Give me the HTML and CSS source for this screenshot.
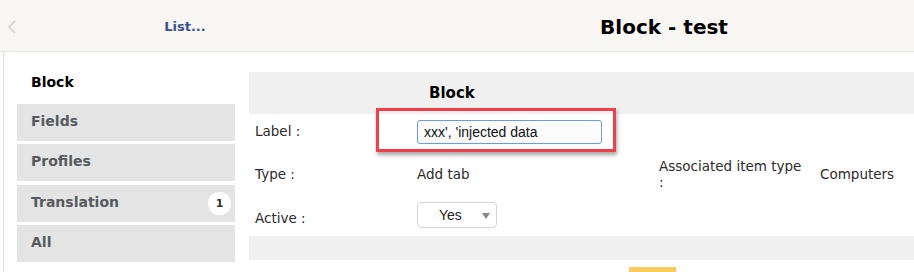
FILE: index.html
```html
<!DOCTYPE html>
<html>
<head>
    <link rel="stylesheet" href="styles.css">
</head>
<body>
    <div class="page-header">
        <a class="back-btn" href="#">
            <svg width="12" height="16" viewBox="0 0 12 16"><polyline points="9,2 3,8 9,14" fill="none" stroke="#cfcfcf" stroke-width="1.6"/></svg>
        </a>
        <a class="list-link" href="#">List...</a>
        <h1 class="page-title">Block - test</h1>
    </div>

    <div class="main">
        <ul class="tabs">
            <li class="tab active">Block</li>
            <li class="tab">Fields</li>
            <li class="tab">Profiles</li>
            <li class="tab">Translation <span class="badge">1</span></li>
            <li class="tab">All</li>
        </ul>

        <div class="content">
            <div class="table-head">Block</div>
            <div class="form-grid">
                <div class="cell label row-1">Label :</div>
                <div class="cell row-1"><input type="text" class="text-input" value="xxx', 'injected data"></div>
                <div class="cell row-1"></div>
                <div class="cell row-1"></div>

                <div class="cell label row-2">Type :</div>
                <div class="cell row-2">Add tab</div>
                <div class="cell label assoc row-2">Associated item type :</div>
                <div class="cell row-2">Computers</div>

                <div class="cell label row-3">Active :</div>
                <div class="cell row-3">
                    <div class="select-box">Yes <span class="arrow"></span></div>
                </div>
                <div class="cell row-3"></div>
                <div class="cell row-3"></div>
            </div>
            <div class="table-foot"></div>
            <div class="save-bar"></div>
        </div>
    </div>

    <!-- highlight drawn over the label field -->
    <div class="highlight"></div>
</body>
</html>
```

FILE: styles.css
```css
body {
    margin: 0;
    width: 914px;
    height: 272px;
    overflow: hidden;
    font-family: "DejaVu Sans", Verdana, sans-serif;
    color: #2b2b2b;
    background: #fff;
}

.page-header {
    display: flex;
    align-items: center;
    height: 51px;
    background: #f7f6f3;
    border-bottom: 1px solid #e8e6e2;
}

.back-btn {
    display: flex;
    width: 40px;
    padding-left: 6px;
    box-sizing: border-box;
    padding-top: 2px;
}

.list-link {
    width: 290px;
    text-align: center;
    font-weight: bold;
    font-size: 13px;
    color: #3a5190;
    text-decoration: none;
    padding-top: 2px;
}

.page-title {
    flex: 1;
    margin: 0 0 0 84px;
    text-align: center;
    font-size: 20px;
    color: #000;
    padding-top: 2px;
}

.main {
    display: flex;
    margin-left: 3px;
    border-left: 1px solid #e3e0db;
    height: 220px;
}

.tabs {
    list-style: none;
    margin: 0;
    padding: 11px 0 0 13px;
    width: 218px;
    flex-shrink: 0;
}

.tab {
    position: relative;
    height: 37px;
    line-height: 35px;
    margin-bottom: 3.5px;
    padding-left: 14px;
    background: #e4e4e4;
    font-weight: bold;
    font-size: 14px;
    color: #555a60;
}

.tab.active {
    background: transparent;
    line-height: 39px;
    color: #000;
}

.badge {
    position: absolute;
    right: 4px;
    top: 7px;
    width: 23px;
    height: 23px;
    line-height: 23px;
    border-radius: 50%;
    background: #fff;
    text-align: center;
    font-size: 11px;
    color: #333;
}

.content {
    margin-left: 14px;
    padding-top: 20px;
    flex: 1;
}

.table-head {
    height: 42px;
    line-height: 42px;
    padding-left: 180px;
    background: #f0f0f0;
    font-weight: bold;
    font-size: 15px;
    color: #000;
}

.form-grid {
    display: grid;
    grid-template-columns: 168px 242px 161px 1fr;
    grid-template-rows: 34px 52px 36px;
    font-size: 13.5px;
}

.cell {
    display: flex;
    align-items: center;
}

.label {
    padding-left: 6px;
}

.assoc {
    padding-left: 0;
    padding-right: 14px;
    line-height: 16px;
}

.text-input {
    width: 185px;
    height: 24px;
    box-sizing: border-box;
    margin-top: 2px;
    padding: 0 6px;
    border: 1px solid #6e9be0;
    border-radius: 3px;
    background: #fcfcfc;
    font-family: "Liberation Sans", Arial, sans-serif;
    font-size: 14px;
    color: #111;
}

.select-box {
    display: flex;
    align-items: center;
    box-sizing: border-box;
    width: 80px;
    height: 26px;
    margin-bottom: 6px;
    padding-left: 21px;
    border: 1px solid #d4d4d4;
    border-radius: 4px;
    font-family: "Liberation Sans", Arial, sans-serif;
    font-size: 14px;
    color: #222;
}

.arrow {
    margin-left: 20px;
    margin-top: 2px;
    border-left: 4px solid transparent;
    border-right: 4px solid transparent;
    border-top: 6px solid #888;
}

.table-foot {
    height: 24px;
    background: #f0f0f0;
}

.save-bar {
    width: 47px;
    height: 6px;
    margin: 7px 0 0 380px;
    background: #fdca5c;
}

.highlight {
    position: absolute;
    left: 376px;
    top: 108px;
    width: 240px;
    height: 44px;
    box-sizing: border-box;
    border: 3px solid #ee4048;
    box-shadow: 1px 3px 4px rgba(0, 0, 0, 0.35);
}
```
